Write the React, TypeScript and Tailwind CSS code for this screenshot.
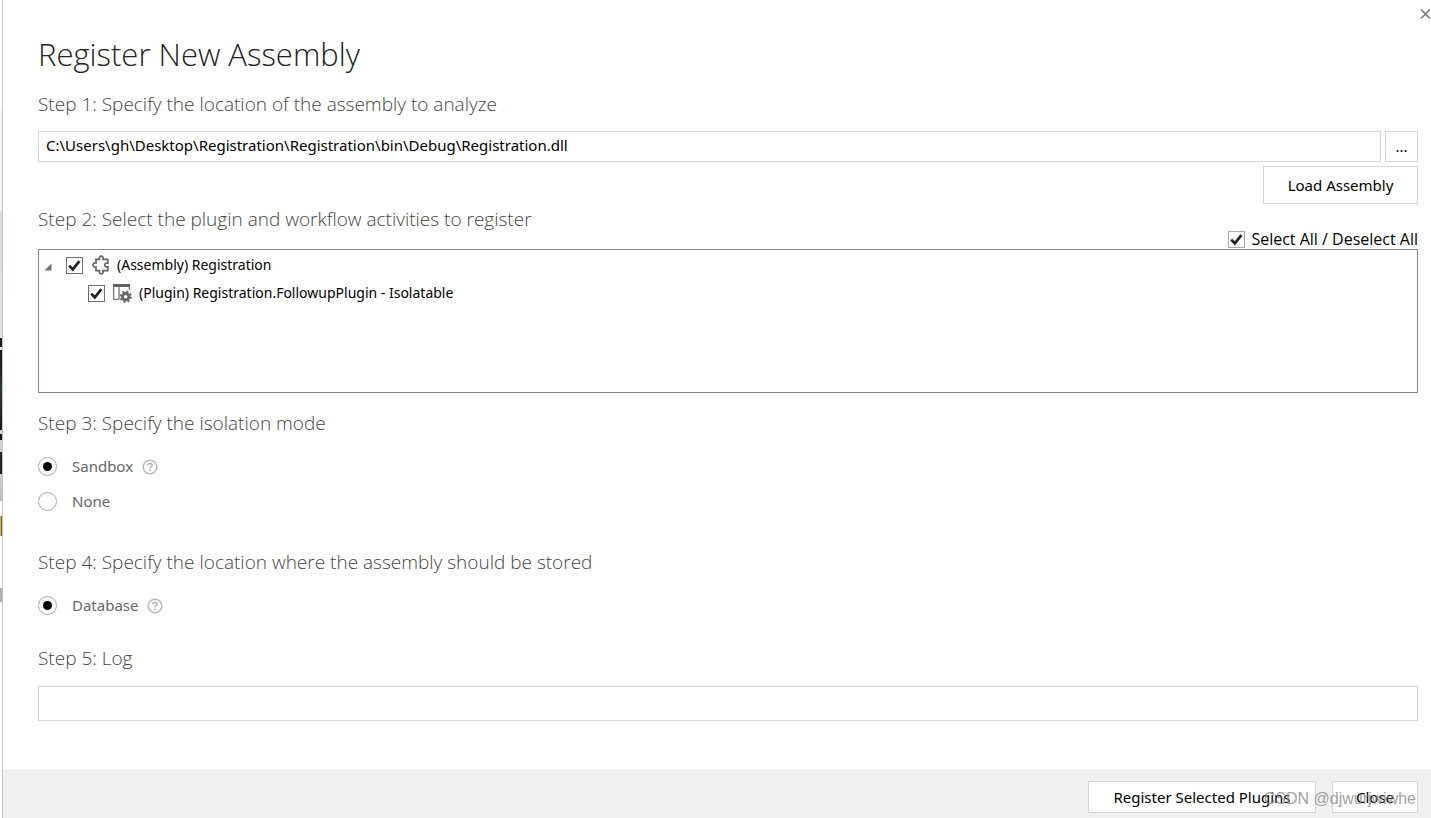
import { useState } from "react";

type StripPart = { h: string; color: string };

// sliver of the window behind the dialog
const STRIP: StripPart[] = [
  { h: "h-[109px]", color: "bg-white" },
  { h: "h-[102px]", color: "bg-[#f4f4f4]" },
  { h: "h-[127px]", color: "bg-linear-to-b from-[#d9dbea] to-[#dfe1ec]" },
  { h: "h-[9px]", color: "bg-[#1b1d1c]" },
  { h: "h-[3px]", color: "bg-[#e4e4e8]" },
  { h: "h-[80px]", color: "bg-linear-to-b from-[#141716] via-[#2c3a36] to-[#161a1a]" },
  { h: "h-[4px]", color: "bg-[#d0d2da]" },
  { h: "h-[6px]", color: "bg-[#111313]" },
  { h: "h-[12px]", color: "bg-[#ccd0dc]" },
  { h: "h-[22px]", color: "bg-[#1e2624]" },
  { h: "h-[27px]", color: "bg-linear-to-b from-[#ccd0dc] to-[#b3b9c4]" },
  { h: "h-[15px]", color: "bg-white" },
  { h: "h-[20px]", color: "bg-linear-to-r from-[#e8ea6a] to-[#5c3b16]" },
  { h: "h-[52px]", color: "bg-white" },
  { h: "h-[14px]", color: "bg-[#b5b0ac]" },
];

const lightFont = "font-['Open_Sans','Noto_Sans_CJK_SC',sans-serif] font-light";
const inputBox = "border border-[#d6d6d6] bg-white text-black outline-none";
const button = "border border-[#d6d6d6] bg-white text-black hover:bg-[#f5f5f5]";

function StepTitle({ children }: { children: React.ReactNode }) {
  return <h2 className={`text-[19px] leading-7 text-[#444] ${lightFont}`}>{children}</h2>;
}

function CheckBox({ id, checked, onChange, label, dark }: {
  id: string;
  checked: boolean;
  onChange: (v: boolean) => void;
  label: string;
  dark?: boolean;
}) {
  return (
    <span className="grid size-[17px] shrink-0">
      <input
        id={id}
        type="checkbox"
        aria-label={label}
        checked={checked}
        onChange={(e) => onChange(e.target.checked)}
        className={`col-start-1 row-start-1 size-[17px] appearance-none border bg-white ${dark ? "border-[#707070]" : "border-[#ababab]"}`}
      />
      {checked && (
        <svg viewBox="0 0 17 17" className="pointer-events-none col-start-1 row-start-1 size-[17px]">
          <path d="M3.2 8.6 6.8 12.4 13.4 4.2" fill="none" stroke="#212121" strokeWidth="2.7" />
        </svg>
      )}
    </span>
  );
}

function HelpIcon() {
  return (
    <svg viewBox="0 0 16 16" className="size-4" fill="none" stroke="#b8b8b8">
      <circle cx="8" cy="8" r="6.8" strokeWidth="1.5" />
      <path d="M5.9 6.3C5.9 3.7 10.1 3.8 10.1 6.2 10.1 7.7 8 7.7 8 9.5" strokeWidth="1.7" />
      <path d="M8 10.6v1.6" strokeWidth="1.7" />
    </svg>
  );
}

function RadioRow({ name, value, checked, onChange, help }: {
  name: string;
  value: string;
  checked: boolean;
  onChange: () => void;
  help?: boolean;
}) {
  return (
    <div className="flex h-[35px] items-center">
      <label className="flex items-center text-[15px] text-[#666]">
        <span className="mr-[15px] grid size-[19px] place-items-center">
          <input
            type="radio"
            name={name}
            checked={checked}
            onChange={onChange}
            className="col-start-1 row-start-1 size-[19px] appearance-none rounded-full border border-[#ababab] bg-white"
          />
          {checked && <span className="pointer-events-none z-10 col-start-1 row-start-1 size-[9px] rounded-full bg-black" />}
        </span>
        {value}
      </label>
      {help && <span className="ml-[9px]"><HelpIcon /></span>}
    </div>
  );
}

// puzzle piece: knobs on top, left and bottom, notch on the right
function AssemblyIcon() {
  return (
    <svg viewBox="0 0 18 20" className="h-5 w-[18px]" fill="none" stroke="#666" strokeWidth="1.7">
      <path d="M4 4.3H7.5C6.2.2 12.3.2 11 4.3H15.8V8.2C11.6 7.2 11.6 12.8 15.8 11.8V15.7H11C12.3 19.8 6.2 19.8 7.5 15.7H4V12C0 13 0 7 4 8Z" />
    </svg>
  );
}

function PluginIcon() {
  return (
    <svg viewBox="0 0 20 20" className="size-5" fill="none">
      <path d="M1 1h17v3H1z" fill="#606060" />
      <path d="M1.6 3v13.4H7M7 3v13.4M17.4 3v4" stroke="#777" strokeWidth="1.3" />
      <circle cx="13.7" cy="13.7" r="5.2" stroke="#666" strokeWidth="2" strokeDasharray="2.04 2.04" />
      <circle cx="13.7" cy="13.7" r="3.2" stroke="#666" strokeWidth="2.8" />
    </svg>
  );
}

export default function App() {
  const [path, setPath] = useState("C:\\Users\\gh\\Desktop\\Registration\\Registration\\bin\\Debug\\Registration.dll");
  const [assembly, setAssembly] = useState(true);
  const [plugin, setPlugin] = useState(true);
  const [mode, setMode] = useState("Sandbox");
  const [log, setLog] = useState("");

  const setAll = (v: boolean) => {
    setAssembly(v);
    setPlugin(v);
  };

  return (
    <div className="relative flex min-h-screen bg-white font-['Noto_Sans','Noto_Sans_CJK_SC',sans-serif]">
      <div className="w-[3px] shrink-0 border-r border-[#c4c4c4]">
        {STRIP.map((s, i) => <div key={i} className={`${s.h} ${s.color}`} />)}
      </div>

      <div className="flex min-w-0 flex-1 flex-col">
        <main className="flex-1 pr-[13px] pl-[35px]">
          <header className="flex items-start justify-between">
            <h1 className={`mt-[30px] text-[31px] leading-[48px] text-[#222] ${lightFont}`}>Register New Assembly</h1>
            <button aria-label="Close dialog" className="-mr-[13px] py-[9px]">
              <svg viewBox="0 0 11 11" className="size-[11px]" stroke="#777" strokeWidth="1.6">
                <path d="M1 .5l9 9M10 .5l-9 9" />
              </svg>
            </button>
          </header>

          <section className="mt-3">
            <StepTitle>Step 1: Specify the location of the assembly to analyze</StepTitle>
            <div className="mt-[13px] flex gap-1">
              <input
                type="text"
                aria-label="Assembly location"
                value={path}
                onChange={(e) => setPath(e.target.value)}
                className={`h-[31px] min-w-0 flex-1 px-[7px] pb-[3px] text-[15px] ${inputBox}`}
              />
              <button aria-label="Browse" className={`h-[31px] w-[33px] text-[15px] ${button}`}>...</button>
            </div>
            <div className="mt-1 flex justify-end">
              <button className={`h-[38px] w-[155px] text-[15px] ${button}`}>Load Assembly</button>
            </div>
          </section>

          <section className="pt-px">
            <div className="flex h-11 justify-between">
              <StepTitle>Step 2: Select the plugin and workflow activities to register</StepTitle>
              <div className="flex items-center gap-[6px] self-end">
                <CheckBox id="all" label="Select All / Deselect All" checked={assembly && plugin} onChange={setAll} />
                <label htmlFor="all" className="font-['Open_Sans',sans-serif] text-[16px] leading-5">Select All / Deselect All</label>
              </div>
            </div>
            <ul className="h-36 border border-[#828790] pt-px text-[14px]">
              <li className="flex h-7 items-center pl-[5px]">
                <svg viewBox="0 0 8 8" className="mt-1 size-2"><path d="M7.5.5v7h-7z" fill="#707070" /></svg>
                <span className="ml-[14px] flex"><CheckBox id="assembly" label="Assembly" checked={assembly} onChange={setAssembly} dark /></span>
                <span className="mr-[7px] ml-[9px]"><AssemblyIcon /></span>
                <label htmlFor="assembly" className="pb-0.5">(Assembly) Registration</label>
              </li>
              <li className="flex h-7 items-center pl-[49px]">
                <CheckBox id="plugin" label="Plugin" checked={plugin} onChange={setPlugin} dark />
                <span className="mx-[7px]"><PluginIcon /></span>
                <label htmlFor="plugin" className="pb-0.5">(Plugin) Registration.FollowupPlugin - Isolatable</label>
              </li>
            </ul>
          </section>

          <section className="mt-4">
            <StepTitle>Step 3: Specify the isolation mode</StepTitle>
            <div className="mt-3">
              <RadioRow name="mode" value="Sandbox" checked={mode === "Sandbox"} onChange={() => setMode("Sandbox")} help />
              <RadioRow name="mode" value="None" checked={mode === "None"} onChange={() => setMode("None")} />
            </div>
          </section>

          <section className="mt-[29px]">
            <StepTitle>Step 4: Specify the location where the assembly should be stored</StepTitle>
            <div className="mt-3">
              <RadioRow name="storage" value="Database" checked onChange={() => {}} help />
            </div>
          </section>

          <section className="mt-[21px] mb-12">
            <StepTitle>Step 5: Log</StepTitle>
            <input
              type="text"
              aria-label="Log"
              value={log}
              onChange={(e) => setLog(e.target.value)}
              className={`mt-[14px] block h-[35px] w-full px-[7px] text-[15px] ${inputBox}`}
            />
          </section>
        </main>

        <footer className="flex justify-end gap-4 bg-[#f0f0f0] pt-3 pr-[13px] pb-[5px]">
          <button className={`h-8 w-[228px] text-[15px] ${button}`}>Register Selected Plugins</button>
          <button className={`h-8 w-[86px] text-[15px] ${button}`}>Close</button>
        </footer>
      </div>

      <span className="pointer-events-none absolute right-[15px] bottom-2 font-['Liberation_Sans',sans-serif] text-[16px] leading-[22px] text-[#888]/80">
        CSDN @djwurjwiwhe
      </span>
    </div>
  );
}
